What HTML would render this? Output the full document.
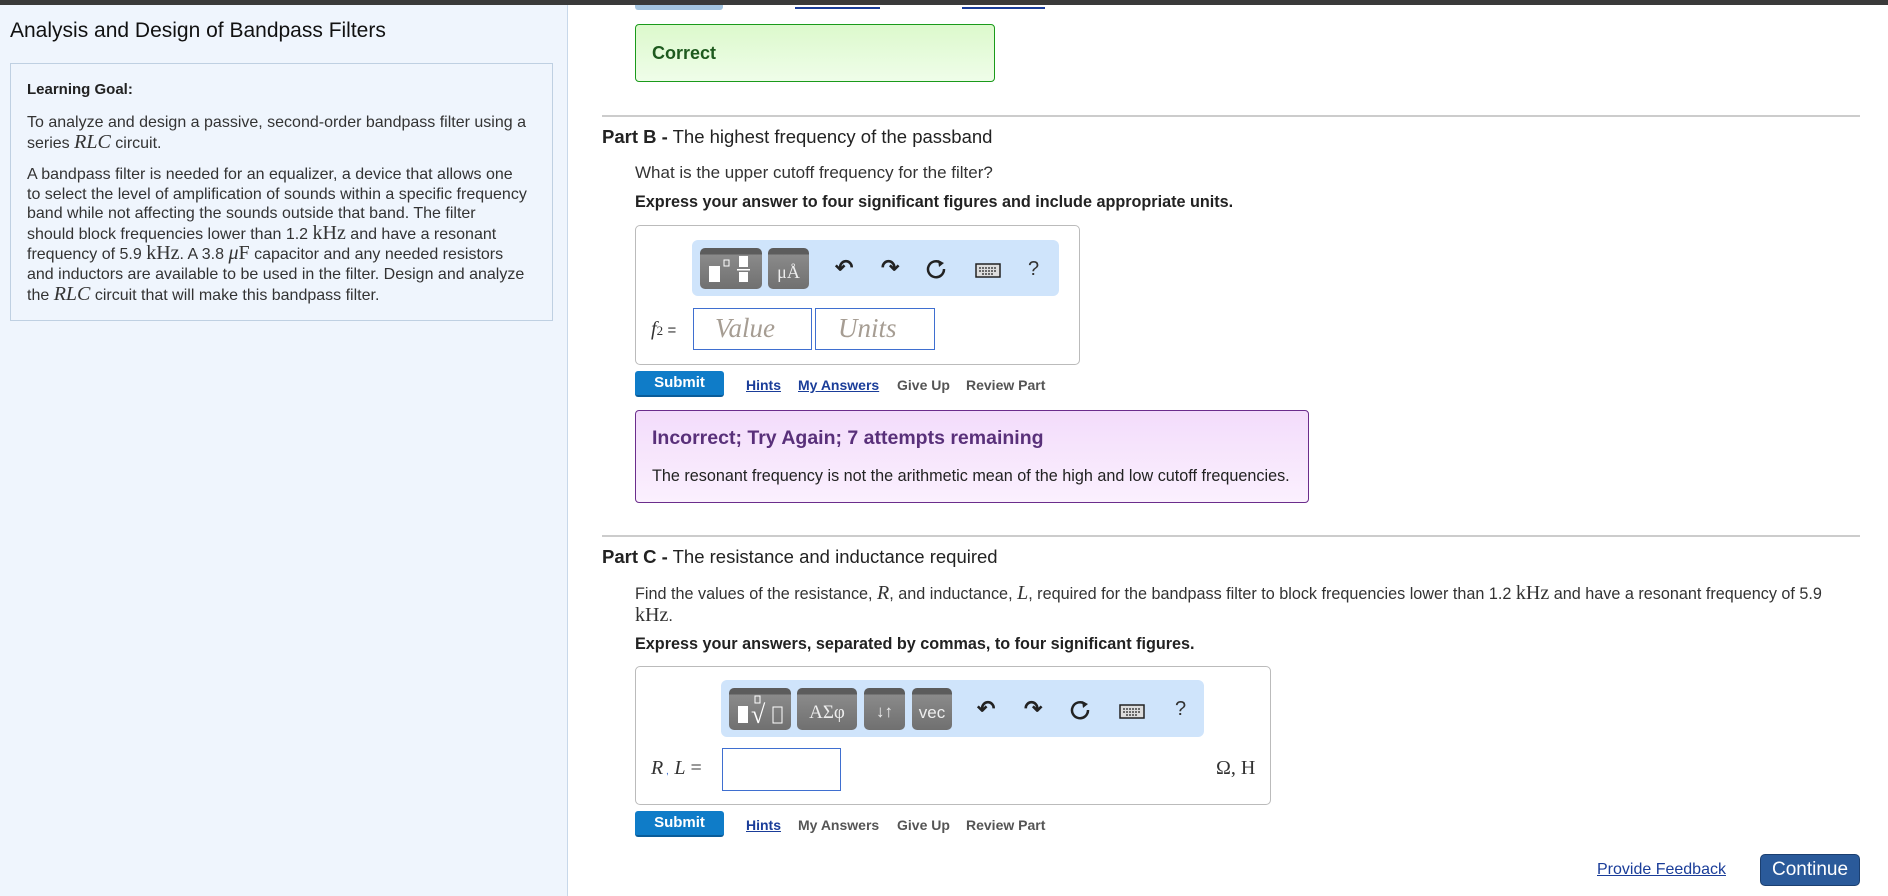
<!DOCTYPE html>
<html><head><meta charset="utf-8"><style>
*{margin:0;padding:0;box-sizing:border-box}
body{width:1888px;height:896px;overflow:hidden;background:#fff;font-family:"Liberation Sans",Arial,sans-serif;color:#333;position:relative}
.a{position:absolute}
.m{font-family:"Liberation Serif",serif;font-style:italic;font-size:20px}
.mr{font-family:"Liberation Serif",serif;font-size:20px}
.tb{background:#cfe4fb;border-radius:6px}
.btn{background:linear-gradient(#5c5c5c 0,#5c5c5c 6px,#8a8a8a 7px,#707070);border-radius:5px;color:#eee;text-align:center}
.ic{color:#222;font-size:22px;font-weight:bold}
.link{color:#1a3d99;text-decoration:underline;font-weight:bold;font-size:14px}
.gl{color:#555;font-weight:bold;font-size:14px}
.lp{white-space:nowrap}
</style></head><body>
<div class="a" style="left:0;top:0;width:1888px;height:5px;background:#3a3a3a"></div>
<div class="a" style="left:0;top:5px;width:568px;height:891px;background:#eff5fd;border-right:1px solid #c8d8ea"></div>
<div class="a" style="left:10px;top:19px;font-size:21px;color:#111">Analysis and Design of Bandpass Filters</div>
<div class="a" style="left:10px;top:63px;width:543px;height:258px;border:1px solid #bfd0e2;background:#eff5fd"></div>
<div class="a" style="left:27px;top:81px;font-size:15px;font-weight:bold;color:#222">Learning Goal:</div>
<div class="a lp" style="left:27px;top:113px;font-size:16px;line-height:19.5px;color:#333">To analyze and design a passive, second-order bandpass filter using a<br>series <span class="m">RLC</span> circuit.</div>
<div class="a lp" style="left:27px;top:165px;font-size:16px;line-height:19.6px;color:#333">A bandpass filter is needed for an equalizer, a device that allows one<br>to select the level of amplification of sounds within a specific frequency<br>band while not affecting the sounds outside that band. The filter<br>should block frequencies lower than 1.2 <span class="mr">kHz</span> and have a resonant<br>frequency of 5.9 <span class="mr">kHz</span>. A 3.8 <span class="m">μ</span><span class="mr">F</span> capacitor and any needed resistors<br>and inductors are available to be used in the filter. Design and analyze<br>the <span class="m">RLC</span> circuit that will make this bandpass filter.</div>

<div class="a" style="left:635px;top:5px;width:88px;height:5px;background:#a3c4e0;border-radius:0 0 3px 3px"></div>
<div class="a" style="left:795px;top:7px;width:85px;height:2px;background:#1a3d99"></div>
<div class="a" style="left:962px;top:7px;width:83px;height:2px;background:#1a3d99"></div>

<div class="a" style="left:635px;top:24px;width:360px;height:58px;border:1px solid #1a9a1a;border-radius:4px;background:linear-gradient(#dcf9cc,#effde9)"></div>
<div class="a" style="left:652px;top:43px;font-size:18px;font-weight:bold;color:#1e5a1e">Correct</div>

<div class="a" style="left:602px;top:115px;width:1258px;height:2px;background:#ccc"></div>
<div class="a" style="left:602px;top:126px;font-size:18.5px;color:#222"><b>Part B -</b> The highest frequency of the passband</div>
<div class="a" style="left:635px;top:163px;font-size:17px;color:#333">What is the upper cutoff frequency for the filter?</div>
<div class="a" style="left:635px;top:193px;font-size:16.2px;font-weight:bold;color:#222">Express your answer to four significant figures and include appropriate units.</div>

<div class="a" style="left:635px;top:225px;width:445px;height:140px;border:1px solid #bbb;border-radius:5px"></div>
<div class="a tb" style="left:692px;top:240px;width:367px;height:56px"></div>
<div class="a btn" style="left:700px;top:248px;width:62px;height:41px"><svg width="62" height="41"><rect x="9" y="18" width="11" height="16" fill="#fff"/><rect x="24" y="12" width="5" height="6" fill="none" stroke="#fff" stroke-width="1"/><rect x="39" y="8" width="9" height="11" fill="#fff"/><rect x="37" y="21" width="13" height="1.5" fill="#fff"/><rect x="39" y="24" width="9" height="10" fill="#fff"/></svg></div>
<div class="a btn" style="left:768px;top:248px;width:41px;height:41px;font-family:'Liberation Serif',serif;font-size:18px;padding-top:14px">μÅ</div>
<div class="a ic" style="left:835px;top:255px">↶</div>
<div class="a ic" style="left:881px;top:255px">↷</div>
<svg class="a" style="left:926px;top:258px" width="22" height="22"><path d="M15 5 A8 8 0 1 0 18 11" fill="none" stroke="#222" stroke-width="2.5"/><path d="M12 2 L18 5 L13 9 Z" fill="#222"/></svg>
<svg class="a" style="left:975px;top:263px" width="26" height="16"><rect x="1" y="1" width="24" height="13" fill="#ddd" stroke="#222" stroke-width="1.5"/><path d="M4 5h18M4 8h18M7 11h12" stroke="#444" stroke-width="1.5" stroke-dasharray="2 1"/></svg>
<div class="a" style="left:1028px;top:258px;font-size:20px;color:#333">?</div>

<div class="a" style="left:651px;top:318px"><span class="m">f</span><span class="mr" style="font-size:13px">2</span> <span style="font-size:15px">=</span></div>
<div class="a" style="left:693px;top:308px;width:119px;height:42px;border:1px solid #3f6fd0;font-family:'Liberation Serif',serif;font-style:italic;font-size:27px;color:#a69d93;padding:4px 0 0 21px">Value</div>
<div class="a" style="left:815px;top:308px;width:120px;height:42px;border:1px solid #3f6fd0;font-family:'Liberation Serif',serif;font-style:italic;font-size:27px;color:#a69d93;padding:4px 0 0 22px">Units</div>

<div class="a" style="left:635px;top:371px;width:89px;height:26px;background:#0f7cc8;border-radius:3px;border-bottom:2px solid #0a5c99;color:#fff;font-weight:bold;font-size:15px;text-align:center;line-height:24px">Submit</div>
<div class="a" style="left:746px;top:377px"><span class="link">Hints</span></div>
<div class="a" style="left:798px;top:377px"><span class="link">My Answers</span></div>
<div class="a gl" style="left:897px;top:377px">Give Up</div>
<div class="a gl" style="left:966px;top:377px">Review Part</div>

<div class="a" style="left:635px;top:410px;width:674px;height:93px;border:1px solid #6b2d8c;border-radius:4px;background:linear-gradient(#f3dcfb,#fbf0fe)"></div>
<div class="a" style="left:652px;top:427px;font-size:19.5px;font-weight:bold;color:#59307a">Incorrect; Try Again; 7 attempts remaining</div>
<div class="a" style="left:652px;top:467px;font-size:16.2px;color:#222">The resonant frequency is not the arithmetic mean of the high and low cutoff frequencies.</div>

<div class="a" style="left:602px;top:535px;width:1258px;height:2px;background:#ccc"></div>
<div class="a" style="left:602px;top:546px;font-size:18.5px;color:#222"><b>Part C -</b> The resistance and inductance required</div>
<div class="a" style="left:635px;top:583px;width:1225px;font-size:16.2px;line-height:21px;color:#333">Find the values of the resistance, <span class="m">R</span>, and inductance, <span class="m">L</span>, required for the bandpass filter to block frequencies lower than 1.2 <span class="mr">kHz</span> and have a resonant frequency of 5.9 <span class="mr">kHz</span>.</div>
<div class="a" style="left:635px;top:635px;font-size:16.2px;font-weight:bold;color:#222">Express your answers, separated by commas, to four significant figures.</div>

<div class="a" style="left:635px;top:666px;width:636px;height:139px;border:1px solid #bbb;border-radius:5px"></div>
<div class="a tb" style="left:721px;top:680px;width:483px;height:57px"></div>
<div class="a btn" style="left:729px;top:688px;width:62px;height:42px"><svg width="62" height="42"><rect x="9" y="18" width="10" height="17" fill="#fff"/><text x="22" y="35" font-family="Liberation Serif" font-size="26" fill="#fff">√</text><rect x="26" y="8" width="5" height="7" fill="none" stroke="#fff"/><rect x="44" y="19" width="9" height="16" fill="none" stroke="#fff"/></svg></div>
<div class="a btn" style="left:797px;top:688px;width:60px;height:42px;font-family:'Liberation Serif',serif;font-size:19px;padding-top:14px">ΑΣφ</div>
<div class="a btn" style="left:864px;top:688px;width:41px;height:42px;font-size:17px;padding-top:14px">↓↑</div>
<div class="a btn" style="left:912px;top:688px;width:40px;height:42px;font-size:17px;padding-top:15px">vec</div>
<div class="a ic" style="left:977px;top:696px">↶</div>
<div class="a ic" style="left:1024px;top:696px">↷</div>
<svg class="a" style="left:1070px;top:699px" width="22" height="22"><path d="M15 5 A8 8 0 1 0 18 11" fill="none" stroke="#222" stroke-width="2.5"/><path d="M12 2 L18 5 L13 9 Z" fill="#222"/></svg>
<svg class="a" style="left:1119px;top:704px" width="26" height="16"><rect x="1" y="1" width="24" height="13" fill="#ddd" stroke="#222" stroke-width="1.5"/><path d="M4 5h18M4 8h18M7 11h12" stroke="#444" stroke-width="1.5" stroke-dasharray="2 1"/></svg>
<div class="a" style="left:1175px;top:698px;font-size:20px;color:#333">?</div>

<div class="a" style="left:651px;top:757px;font-size:20px"><span class="m" style="font-size:20px">R</span><span style="font-size:10px;color:#36c"> ,</span> <span class="m" style="font-size:20px">L</span><span class="mr" style="font-size:20px"> =</span></div>
<div class="a" style="left:722px;top:748px;width:119px;height:43px;border:1px solid #3f6fd0"></div>
<div class="a mr" style="left:1216px;top:757px;font-size:20px">Ω, H</div>

<div class="a" style="left:635px;top:811px;width:89px;height:26px;background:#0f7cc8;border-radius:3px;border-bottom:2px solid #0a5c99;color:#fff;font-weight:bold;font-size:15px;text-align:center;line-height:24px">Submit</div>
<div class="a" style="left:746px;top:817px"><span class="link">Hints</span></div>
<div class="a gl" style="left:798px;top:817px">My Answers</div>
<div class="a gl" style="left:897px;top:817px">Give Up</div>
<div class="a gl" style="left:966px;top:817px">Review Part</div>

<div class="a" style="left:1597px;top:861px;font-size:16px;color:#1a3d99;text-decoration:underline">Provide Feedback</div>
<div class="a" style="left:1760px;top:854px;width:100px;height:32px;background:#2a5a9a;border:1px solid #1b3f70;border-radius:5px;color:#fff;font-size:19px;text-align:center;line-height:30px">Continue</div>
</body></html>
